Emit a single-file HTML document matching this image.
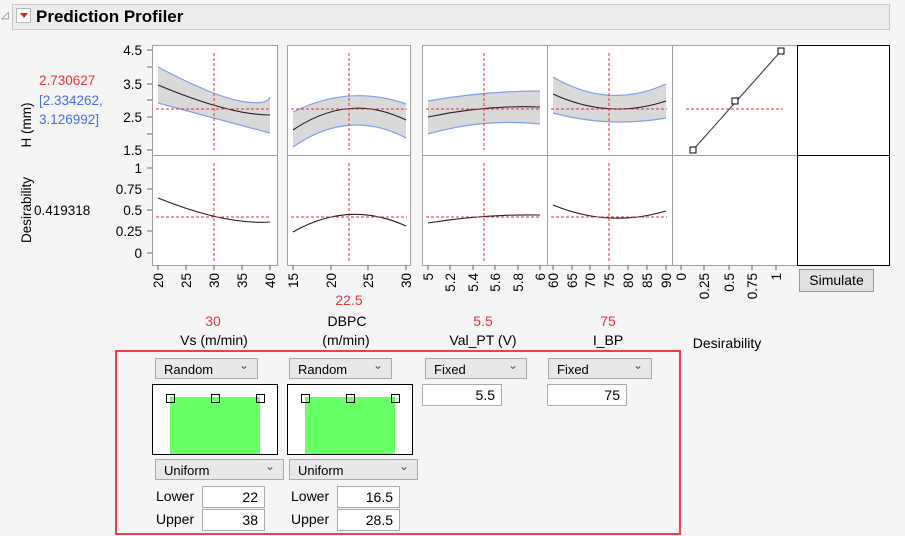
<!DOCTYPE html>
<html><head><style>
body{margin:0;width:905px;height:536px;background:#f5f5f5;font-family:"Liberation Sans",sans-serif;position:relative;overflow:hidden}
.a{position:absolute}
.dd{position:absolute;height:21px;border:1px solid #aaa;background:#e8e8e8;font-size:13px;line-height:21px;padding-left:8px;box-sizing:border-box}
.dd:after{content:"⌄";position:absolute;right:8px;top:-4px;font-size:12px;color:#555}
.in{position:absolute;background:#fff;border:1px solid #aaa;height:22px;box-sizing:border-box;text-align:right;padding-right:6px;font-size:14px;line-height:20px}
</style></head><body>
<div class="a" style="left:12px;top:4px;width:878px;height:26px;background:#ececec;border:1px solid #c8c8c8;box-sizing:border-box"></div>
<div class="a" style="left:1px;top:10px;font-size:10px;color:#777">◿</div>
<div class="a" style="left:16px;top:8px;width:15px;height:15px;background:#fff;border:1px solid #bbb;box-sizing:border-box"><div style="margin:4px 0 0 3px;width:0;height:0;border-left:4px solid transparent;border-right:4px solid transparent;border-top:5px solid #d22"></div></div>
<div class="a" style="left:36px;top:7px;font-size:17px;font-weight:bold">Prediction Profiler</div>
<svg class="a" style="left:0;top:0" width="905" height="536" font-family="Liberation Sans" font-size="13">
<g fill="#fff" stroke="#a0a0a0">
<rect x="152.5" y="45.5" width="125" height="110"/><rect x="152.5" y="155.5" width="125" height="110"/>
<rect x="287.5" y="45.5" width="123" height="110"/><rect x="287.5" y="155.5" width="123" height="110"/>
<rect x="422.5" y="45.5" width="125" height="110"/><rect x="422.5" y="155.5" width="125" height="110"/>
<rect x="547.5" y="45.5" width="125" height="110"/><rect x="547.5" y="155.5" width="125" height="110"/>
<rect x="672.5" y="45.5" width="125" height="110"/><rect x="672.5" y="155.5" width="125" height="110"/>
</g>
<rect x="797.5" y="45.5" width="92" height="110" fill="#fff" stroke="#000"/><rect x="797.5" y="155.5" width="92" height="110" fill="#fff" stroke="#000"/>
<g fill="#d9d9d9" stroke="none">
<path d="M158,67 Q213,96 240,101 T270,97 L270,133 Q213,118 158,103Z"/>
<path d="M293,112 Q349,84 406,104 L406,138 Q349,108 293,147Z"/>
<path d="M428,101 Q484,91 540,91 L540,124 Q484,118 428,134Z"/>
<path d="M553,77 Q609,110 666,84 L666,118 Q609,128 553,113Z"/>
</g>
<g fill="none" stroke="#7fa0e8" stroke-width="1.2">
<path d="M158,67 Q213,96 240,101 T270,97"/><path d="M158,103 Q213,118 270,133"/>
<path d="M293,112 Q349,84 406,104"/><path d="M293,147 Q349,108 406,138"/>
<path d="M428,101 Q484,91 540,91"/><path d="M428,134 Q484,118 540,124"/>
<path d="M553,77 Q609,110 666,84"/><path d="M553,113 Q609,128 666,118"/>
</g>
<g fill="none" stroke="#222" stroke-width="1.1">
<path d="M158,85 Q230,115 270,115"/><path d="M293,130 Q349,92 406,120"/><path d="M428,117 Q484,105 540,107"/><path d="M553,94 Q609,120 666,101"/>
<path d="M158,198 Q225,225 270,222"/><path d="M293,232 Q349,200 406,226"/><path d="M428,223 Q484,214 540,215"/><path d="M553,205 Q609,228 666,211"/>
<path d="M693,150 L781,51" stroke="#444"/>
</g>
<g fill="#fff" stroke="#000"><rect x="690" y="147" width="6" height="6"/><rect x="732" y="98" width="6" height="6"/><rect x="778" y="48" width="6" height="6"/></g>
<g stroke="#e0303a" stroke-dasharray="3,2" fill="none">
<path d="M214,53V150M214,163V262M349,53V150M349,163V262M484,53V150M484,163V262M609,53V150M609,163V262"/>
<path d="M156,109H271M291,109H407M426,109H541M551,109H667M686,109H783M156,217H271M291,217H407M426,217H541M551,217H667"/>
</g>
<g stroke="#666"><path d="M147,50H152M147,67H152M147,84H152M147,100H152M147,117H152M147,134H152M147,150H152M147,168H152M147,189H152M147,210H152M147,231H152M147,253H152"/>
<path d="M158,265v5M186,265v5M214,265v5M242,265v5M270,265v5M293,265v5M331,265v5M368,265v5M406,265v5M428,265v5M450,265v5M473,265v5M495,265v5M518,265v5M540,265v5M553,265v5M572,265v5M590,265v5M609,265v5M628,265v5M647,265v5M666,265v5M681,265v5M704,265v5M729,265v5M752,265v5M776,265v5"/></g>
<g text-anchor="end" font-size="13.5">
<text x="142" y="55">4.5</text><text x="142" y="89">3.5</text><text x="142" y="122">2.5</text><text x="142" y="155">1.5</text>
<text x="142" y="173">1</text><text x="142" y="194">0.75</text><text x="142" y="215">0.5</text><text x="142" y="236">0.25</text><text x="142" y="258">0</text>
</g>
<g text-anchor="end" font-size="13.5">
<text transform="translate(163,273) rotate(-90)">20</text><text transform="translate(191,273) rotate(-90)">25</text><text transform="translate(219,273) rotate(-90)">30</text><text transform="translate(247,273) rotate(-90)">35</text><text transform="translate(275,273) rotate(-90)">40</text>
<text transform="translate(298,273) rotate(-90)">15</text><text transform="translate(336,273) rotate(-90)">20</text><text transform="translate(373,273) rotate(-90)">25</text><text transform="translate(411,273) rotate(-90)">30</text>
<text transform="translate(433,273) rotate(-90)">5</text><text transform="translate(455,273) rotate(-90)">5.2</text><text transform="translate(478,273) rotate(-90)">5.4</text><text transform="translate(500,273) rotate(-90)">5.6</text><text transform="translate(523,273) rotate(-90)">5.8</text><text transform="translate(545,273) rotate(-90)">6</text>
<text transform="translate(558,273) rotate(-90)">60</text><text transform="translate(577,273) rotate(-90)">65</text><text transform="translate(595,273) rotate(-90)">70</text><text transform="translate(614,273) rotate(-90)">75</text><text transform="translate(633,273) rotate(-90)">80</text><text transform="translate(652,273) rotate(-90)">85</text><text transform="translate(671,273) rotate(-90)">90</text>
<text transform="translate(686,273) rotate(-90)">0</text><text transform="translate(709,273) rotate(-90)">0.25</text><text transform="translate(734,273) rotate(-90)">0.5</text><text transform="translate(757,273) rotate(-90)">0.75</text><text transform="translate(781,273) rotate(-90)">1</text>
</g>
<text transform="translate(31,125) rotate(-90)" font-size="13.5" text-anchor="middle">H (mm)</text>
<text transform="translate(31,210) rotate(-90)" font-size="13.5" text-anchor="middle">Desirability</text>
<text x="39" y="85" fill="#e8353f" font-size="13.5">2.730627</text>
<text x="39" y="105" fill="#4a6cf0" font-size="13.5">[2.334262,</text>
<text x="39" y="124" fill="#4a6cf0" font-size="13.5">3.126992]</text>
<text x="34" y="215" font-size="13.5">0.419318</text>
<g text-anchor="middle" font-size="14">
<text x="213" y="326" fill="#e8353f">30</text><text x="214" y="345">Vs (m/min)</text>
<text x="349" y="305" fill="#e8353f">22.5</text><text x="347" y="326">DBPC</text><text x="346" y="345">(m/min)</text>
<text x="483" y="326" fill="#e8353f">5.5</text><text x="483" y="345">Val_PT (V)</text>
<text x="608" y="326" fill="#e8353f">75</text><text x="608" y="345">I_BP</text>
<text x="727" y="348">Desirability</text>
</g>
</svg>
<div class="a" style="left:799px;top:269px;width:75px;height:23px;background:#e1e1e1;border:1px solid #999;box-sizing:border-box;font-size:14px;text-align:center;line-height:21px">Simulate</div>
<div class="a" style="left:115px;top:350px;width:566px;height:185px;border:2px solid #f04048;box-sizing:border-box"></div>
<div class="dd" style="left:155px;top:358px;width:103px">Random</div>
<div class="dd" style="left:289px;top:358px;width:103px">Random</div>
<div class="dd" style="left:425px;top:358px;width:102px">Fixed</div>
<div class="dd" style="left:548px;top:358px;width:104px">Fixed</div>
<div class="in" style="left:422px;top:384px;width:80px">5.5</div>
<div class="in" style="left:547px;top:384px;width:80px">75</div>
<svg class="a" style="left:0;top:0" width="905" height="536">
<rect x="152.5" y="384.5" width="125" height="70" fill="#fff" stroke="#000"/>
<rect x="287.5" y="384.5" width="125" height="70" fill="#fff" stroke="#000"/>
<rect x="170" y="397" width="90" height="57" fill="#66ff66"/>
<rect x="305" y="397" width="90" height="57" fill="#66ff66"/>
<g fill="none" stroke="#000"><rect x="166.5" y="394.5" width="8" height="8"/><rect x="211.5" y="394.5" width="8" height="8"/><rect x="256.5" y="394.5" width="8" height="8"/>
<rect x="301.5" y="394.5" width="8" height="8"/><rect x="346.5" y="394.5" width="8" height="8"/><rect x="391.5" y="394.5" width="8" height="8"/></g>
</svg>
<div class="dd" style="left:155px;top:459px;width:129px">Uniform</div>
<div class="dd" style="left:289px;top:459px;width:129px">Uniform</div>
<div class="a" style="left:156px;top:488px;font-size:14px">Lower</div>
<div class="a" style="left:156px;top:511px;font-size:14px">Upper</div>
<div class="a" style="left:291px;top:488px;font-size:14px">Lower</div>
<div class="a" style="left:291px;top:511px;font-size:14px">Upper</div>
<div class="in" style="left:202px;top:486px;width:63px">22</div>
<div class="in" style="left:202px;top:509px;width:63px">38</div>
<div class="in" style="left:337px;top:486px;width:63px">16.5</div>
<div class="in" style="left:337px;top:509px;width:63px">28.5</div>
</body></html>
